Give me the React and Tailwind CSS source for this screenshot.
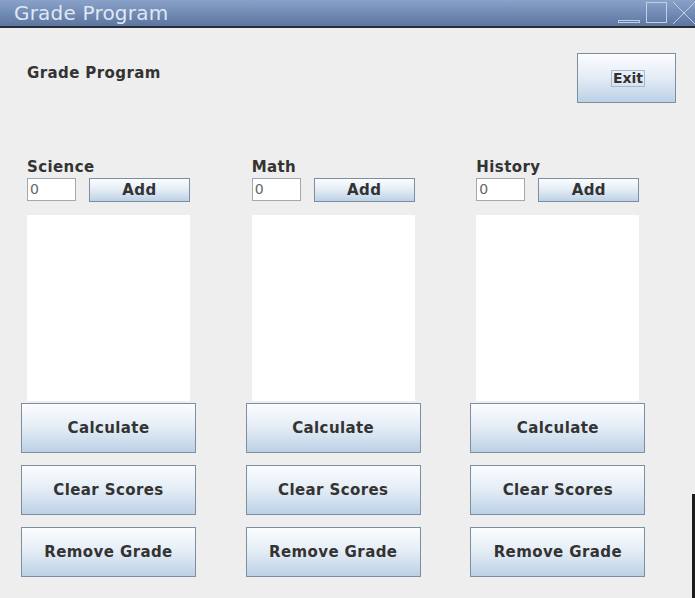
const font = { fontFamily: '"DejaVu Sans", Verdana, sans-serif' };

function MetalButton({ children, className = "" }) {
  return (
    <button
      className={
        "flex items-center justify-center border border-[#7f8e9e] bg-gradient-to-b from-[#fbfdff] via-[#e3ecf5] to-[#bcd1e6] text-[15px] font-bold tracking-[0.4px] text-[#333333] " +
        className
      }
    >
      {children}
    </button>
  );
}

function SubjectColumn({ name }) {
  return (
    <div className="flex w-[225px] flex-col">
      <div className="ml-[6px] h-[18px] text-[15px] font-bold leading-[18px] tracking-[0.4px] text-[#333333]">{name}</div>
      <div className="ml-[6px] mt-[2px] flex h-[24px] items-start">
        <div className="flex h-[23px] w-[49px] items-center border border-[#a0a8b0] bg-white pl-[2px] text-[14px] text-[#666666]">
          0
        </div>
        <MetalButton className="ml-[13px] h-[24px] w-[101px]">Add</MetalButton>
      </div>
      <div className="ml-[6px] mt-[13px] h-[186px] w-[163px] bg-white" />
      <div className="mt-[2px] flex flex-col gap-[12px]">
        <MetalButton className="h-[50px] w-[175px]">Calculate</MetalButton>
        <MetalButton className="h-[50px] w-[175px]">Clear Scores</MetalButton>
        <MetalButton className="h-[50px] w-[175px]">Remove Grade</MetalButton>
      </div>
    </div>
  );
}

export default function App() {
  return (
    <div className="relative h-[598px] w-[695px] overflow-hidden bg-[#eeeeee]" style={font}>
      {/* title bar */}
      <div className="flex h-[28px] items-start border-b-2 border-[#262c36] bg-gradient-to-b from-[#8aa2c9] to-[#5c76a0]">
        <div className="ml-[14px] flex-1 text-[20px] leading-[26px] tracking-[0.2px] text-[#dfe7f3]">Grade Program</div>
        <div className="flex h-[26px] items-start">
          <div className="mt-[20px] h-[3px] w-[22px] border border-[#c3d0e4]" />
          <div className="ml-[6px] mt-[2px] h-[21px] w-[21px] border border-[#c3d0e4]" />
          <svg className="ml-[6px] mt-[2px]" width="22" height="22" viewBox="0 0 22 22">
            <path d="M0 0 L22 22 M22 0 L0 22" stroke="#c3d0e4" strokeWidth="1" fill="none" />
          </svg>
        </div>
      </div>

      <div className="pl-[21px]">
        {/* header row */}
        <div className="mt-[25px] flex h-[50px] items-center">
          <div className="mb-[10px] ml-[6px] flex-1 text-[15px] font-bold tracking-[0.4px] text-[#333333]">Grade Program</div>
          <MetalButton className="mr-[19px] h-[50px] w-[99px]">
            <span className="ml-[3px] border border-[#a9b8ca] px-[1px] text-[14px] leading-[15px] tracking-normal">Exit</span>
          </MetalButton>
        </div>

        {/* subject columns */}
        <div className="mt-[55px] flex">
          <SubjectColumn name="Science" />
          <SubjectColumn name="Math" />
          <SubjectColumn name="History" />
        </div>
      </div>

      <div className="absolute right-0 top-[494px] h-[104px] w-[3px] bg-[#1c1c1c]" />
    </div>
  );
}
